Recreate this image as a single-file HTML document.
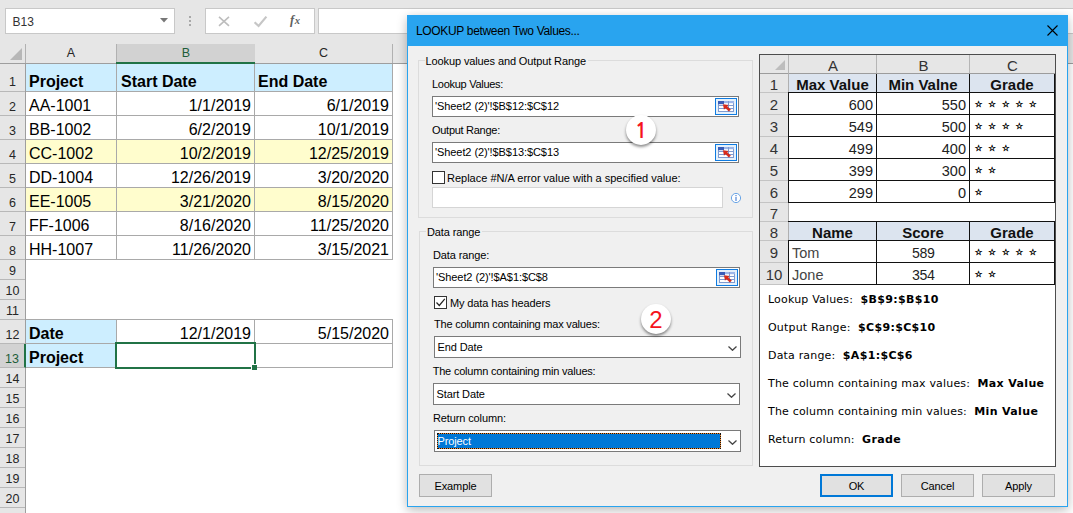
<!DOCTYPE html>
<html><head><meta charset="utf-8">
<style>
*{box-sizing:border-box;margin:0;padding:0}
html,body{width:1073px;height:513px;overflow:hidden;background:#fff}
body{position:relative;font-family:"Liberation Sans",sans-serif;color:#000}
.abs{position:absolute}
#topbar{left:0;top:0;width:1073px;height:44px;background:#e6e6e6}
.box{position:absolute;background:#fff;border:1px solid #c8c8c8}
#colhdr{z-index:2;left:0;top:44px;width:1073px;height:20px;background:#e6e6e6;border-bottom:1px solid #9e9e9e}
.ch{position:absolute;top:0;height:19px;font-size:12.5px;line-height:19px;text-align:center;color:#262626;border-right:1px solid #b1b1b1}
#rowhdr{left:0;top:64px;width:26px;height:449px;background:#e6e6e6;border-right:1px solid #9e9e9e}
.rh{position:absolute;left:0;width:25px;text-align:center;font-size:12.5px;color:#262626;border-bottom:1px solid #b8b8b8}
.cell{position:absolute;font-size:16px;white-space:nowrap;border-right:1px solid #a9a9a9;border-bottom:1px solid #a9a9a9;line-height:18px;padding:0 3px 0 3px;display:flex;align-items:flex-end}
.cell.r{justify-content:flex-end}
.cell.b{font-weight:bold}
.blue{background:#cdeeff}
.yel{background:#fffdcd}
</style></head><body>
<div id="topbar" class="abs"></div>
<div class="box" style="left:5px;top:8px;width:170px;height:26px"><span class="abs" style="left:6.5px;top:6px;font-size:12px;color:#333">B13</span>
<svg class="abs" style="left:154px;top:9px" width="9" height="5"><path d="M0 0h8l-4 4.5z" fill="#777"/></svg></div>
<svg class="abs" style="left:188px;top:15px" width="4" height="12"><rect x="1" y="1" width="2" height="2" fill="#a8a8a8"/><rect x="1" y="5" width="2" height="2" fill="#a8a8a8"/><rect x="1" y="9" width="2" height="2" fill="#a8a8a8"/></svg>
<div class="box" style="left:205px;top:8px;width:110px;height:26px">
<svg class="abs" style="left:12px;top:7px" width="12" height="11"><path d="M1 0.8L11 9.8M11 0.8L1 9.8" stroke="#bdbdbd" stroke-width="1.6" fill="none"/></svg>
<svg class="abs" style="left:47px;top:6px" width="15" height="13"><path d="M1.6 7.2L5.6 11L13.4 1.6" stroke="#c6c6c6" stroke-width="2.2" fill="none"/></svg>
<span class="abs" style="left:84px;top:1px;font-family:'Liberation Serif',serif;font-style:italic;font-weight:bold;font-size:12.5px;line-height:20px;color:#606060;letter-spacing:0.6px">f<span style="font-size:10.5px">x</span></span>
</div>
<div class="box" style="left:318px;top:8px;width:760px;height:26px"></div>

<div id="colhdr" class="abs">
<svg class="abs" style="left:10px;top:4px" width="13" height="13"><path d="M12 0V12H0z" fill="#b7b7b7"/></svg>
<div class="ch" style="left:0;width:26px"></div>
<div class="ch" style="left:26px;width:91px">A</div>
<div class="ch" style="left:117px;width:138px;background:#d2d2d2;color:#1e5e3a;border-right:0;font-size:12.5px">B</div>
<div class="abs" style="left:116px;top:18px;width:139px;height:2px;background:#217346"></div>
<div class="ch" style="left:255px;width:138px">C</div>
</div>
<div id="rowhdr" class="abs">
<div class="rh" style="top:0px;height:28px;line-height:37px">1</div>
<div class="rh" style="top:28px;height:24px;line-height:30px">2</div>
<div class="rh" style="top:52px;height:24px;line-height:30px">3</div>
<div class="rh" style="top:76px;height:24px;line-height:30px">4</div>
<div class="rh" style="top:100px;height:24px;line-height:30px">5</div>
<div class="rh" style="top:124px;height:24px;line-height:30px">6</div>
<div class="rh" style="top:148px;height:24px;line-height:30px">7</div>
<div class="rh" style="top:172px;height:24px;line-height:30px">8</div>
<div class="rh" style="top:196px;height:20px;line-height:22px">9</div>
<div class="rh" style="top:216px;height:20px;line-height:22px">10</div>
<div class="rh" style="top:236px;height:20px;line-height:22px">11</div>
<div class="rh" style="top:256px;height:24px;line-height:30px">12</div>
<div class="rh" style="top:280px;height:24px;line-height:30px;background:#d2d2d2;color:#1e5e3a;border-right:2px solid #217346;width:26px">13</div>
<div class="rh" style="top:304px;height:20px;line-height:22px">14</div>
<div class="rh" style="top:324px;height:20px;line-height:22px">15</div>
<div class="rh" style="top:344px;height:20px;line-height:22px">16</div>
<div class="rh" style="top:364px;height:20px;line-height:22px">17</div>
<div class="rh" style="top:384px;height:20px;line-height:22px">18</div>
<div class="rh" style="top:404px;height:20px;line-height:22px">19</div>
<div class="rh" style="top:424px;height:20px;line-height:22px">20</div>
<div class="rh" style="top:444px;height:20px;line-height:22px">21</div>
</div>
<div id="cells">
<div class="cell b blue" style="left:26px;top:64px;width:91px;height:28px">Project</div>
<div class="cell b blue" style="left:117px;top:64px;width:138px;height:28px;padding-left:4px">Start Date</div>
<div class="cell b blue" style="left:255px;top:64px;width:138px;height:28px">End Date</div>
<div class="cell" style="left:26px;top:92px;width:91px;height:24px">AA-1001</div>
<div class="cell r" style="left:117px;top:92px;width:138px;height:24px">1/1/2019</div>
<div class="cell r" style="left:255px;top:92px;width:138px;height:24px">6/1/2019</div>
<div class="cell" style="left:26px;top:116px;width:91px;height:24px">BB-1002</div>
<div class="cell r" style="left:117px;top:116px;width:138px;height:24px">6/2/2019</div>
<div class="cell r" style="left:255px;top:116px;width:138px;height:24px">10/1/2019</div>
<div class="cell yel" style="left:26px;top:140px;width:91px;height:24px">CC-1002</div>
<div class="cell yel r" style="left:117px;top:140px;width:138px;height:24px">10/2/2019</div>
<div class="cell yel r" style="left:255px;top:140px;width:138px;height:24px">12/25/2019</div>
<div class="cell" style="left:26px;top:164px;width:91px;height:24px">DD-1004</div>
<div class="cell r" style="left:117px;top:164px;width:138px;height:24px">12/26/2019</div>
<div class="cell r" style="left:255px;top:164px;width:138px;height:24px">3/20/2020</div>
<div class="cell yel" style="left:26px;top:188px;width:91px;height:24px">EE-1005</div>
<div class="cell yel r" style="left:117px;top:188px;width:138px;height:24px">3/21/2020</div>
<div class="cell yel r" style="left:255px;top:188px;width:138px;height:24px">8/15/2020</div>
<div class="cell" style="left:26px;top:212px;width:91px;height:24px">FF-1006</div>
<div class="cell r" style="left:117px;top:212px;width:138px;height:24px">8/16/2020</div>
<div class="cell r" style="left:255px;top:212px;width:138px;height:24px">11/25/2020</div>
<div class="cell" style="left:26px;top:236px;width:91px;height:24px">HH-1007</div>
<div class="cell r" style="left:117px;top:236px;width:138px;height:24px">11/26/2020</div>
<div class="cell r" style="left:255px;top:236px;width:138px;height:24px">3/15/2021</div>
<div class="cell b blue" style="left:26px;top:320px;width:91px;height:24px">Date</div>
<div class="cell r" style="left:117px;top:320px;width:138px;height:24px">12/1/2019</div>
<div class="cell r" style="left:255px;top:320px;width:138px;height:24px">5/15/2020</div>
<div class="cell b blue" style="left:26px;top:344px;width:91px;height:24px">Project</div>
<div class="cell r" style="left:117px;top:344px;width:138px;height:24px"></div>
<div class="cell r" style="left:255px;top:344px;width:138px;height:24px"></div>
<div class="abs" style="left:26px;top:319px;width:367px;height:1px;background:#a9a9a9"></div>
<div class="abs" style="left:115px;top:342px;width:141px;height:27px;border:2px solid #217346"></div>
<div class="abs" style="left:251px;top:364px;width:5px;height:5px;background:#217346;border:1px solid #fff;border-right:0;border-bottom:0;box-sizing:content-box"></div>
</div>
<style>
#dlg{z-index:5;left:407px;top:15px;width:661px;height:492px;background:#f0f0f0;border:1px solid #29a4ef;box-shadow:0 3px 10px 0 rgba(0,0,0,.28);font-size:11px;letter-spacing:-0.12px;color:#000}
#dlg .t{position:absolute;white-space:nowrap;line-height:13px}
#ttl{left:0;top:0;width:659px;height:30px;background:#29a4ef}
.grp{position:absolute;border:1px solid #dcdcdc}
.grp>.lg{position:absolute;top:-7px;left:4px;padding:0 2px 0 1px;background:#f0f0f0;line-height:13px;white-space:nowrap}
.inp{position:absolute;background:#fff;border:1px solid #7a7a7a;height:21px}
.inp>span{position:absolute;left:2px;top:3px;line-height:13px;white-space:nowrap;letter-spacing:-0.08px}
.refb{position:absolute;right:1px;top:1px;width:22px;height:17px;border:1px solid #0f7be0;background:#e5f1fb}
.sel{position:absolute;background:#fff;border:1px solid #7a7a7a;height:22px}
.sel>span{position:absolute;left:2.5px;top:4px;line-height:13px;white-space:nowrap}
.chev{position:absolute;right:3.5px;top:8.5px}
.btn{position:absolute;height:23px;background:#e1e1e1;border:1px solid #adadad;text-align:center;line-height:21px}
.cb{position:absolute;width:13px;height:13px;border:1px solid #333;background:#fff}
.num{position:absolute;width:30px;height:30px;border-radius:50%;background:#fff;box-shadow:0 2px 3px rgba(0,0,0,.45);color:#f5141c;font-size:24px;line-height:31px;text-align:center;letter-spacing:0}
#pv{left:351px;top:38px;width:297px;height:413px;background:#fff;border:1px solid #4d4d4d;overflow:hidden;letter-spacing:0}
</style>
<div id="dlg" class="abs">
<div id="ttl" class="abs"><span class="t" style="left:8px;top:8px;font-size:12px;letter-spacing:-0.33px;line-height:14px">LOOKUP between Two Values...</span>
<svg class="abs" style="left:639px;top:9px" width="11" height="11"><path d="M0.5 0.5L10.5 10.5M10.5 0.5L0.5 10.5" stroke="#000" stroke-width="1.1" fill="none"/></svg></div>

<div class="grp" style="left:10px;top:44px;width:335px;height:158px"><span class="lg" style="left:5.6px;top:-6px">Lookup values and Output Range</span></div>
<span class="t" style="left:24px;top:62px;letter-spacing:-0.28px">Lookup Values:</span>
<div class="inp" style="left:24px;top:80px;width:307px"><span>'Sheet2 (2)'!$B$12:$C$12</span><div class="refb"><svg class="abs" style="left:2px;top:2px" width="16" height="11" viewBox="0 0 16 11"><rect x="0.5" y="0.5" width="15" height="10" fill="#fff" stroke="#7f9bd1"/><rect x="0" y="0" width="16" height="2.2" fill="#9db7ea"/><rect x="0" y="0" width="6" height="3.2" fill="#3a5db8"/><path d="M0 4.5H16M0 7.5H16M10.5 0V11" stroke="#7f9bd1" stroke-width="1" fill="none"/><path d="M5.2 3.4L10.3 4.2L9 5.4L12.6 8.6L10.9 10.3L7.5 6.9L6.2 8.3Z" fill="#dc2a1a" stroke="#b81d10" stroke-width="0.4"/></svg></div></div>
<span class="t" style="left:24px;top:108px;letter-spacing:-0.28px">Output Range:</span>
<div class="inp" style="left:24px;top:126px;width:307px"><span>'Sheet2 (2)'!$B$13:$C$13</span><div class="refb"><svg class="abs" style="left:2px;top:2px" width="16" height="11" viewBox="0 0 16 11"><rect x="0.5" y="0.5" width="15" height="10" fill="#fff" stroke="#7f9bd1"/><rect x="0" y="0" width="16" height="2.2" fill="#9db7ea"/><rect x="0" y="0" width="6" height="3.2" fill="#3a5db8"/><path d="M0 4.5H16M0 7.5H16M10.5 0V11" stroke="#7f9bd1" stroke-width="1" fill="none"/><path d="M5.2 3.4L10.3 4.2L9 5.4L12.6 8.6L10.9 10.3L7.5 6.9L6.2 8.3Z" fill="#dc2a1a" stroke="#b81d10" stroke-width="0.4"/></svg></div></div>
<div class="cb" style="left:24px;top:155px"></div>
<span class="t" style="left:39px;top:156px;letter-spacing:0">Replace #N/A error value with a specified value:</span>
<div class="inp" style="left:24px;top:171px;width:291px;height:21px;border-color:#d5d5d5"></div>
<svg class="abs" style="left:321.6px;top:175.5px" width="12" height="12"><circle cx="6" cy="6" r="4.6" fill="#fff" stroke="#6aa5e6" stroke-width="1"/><rect x="5.5" y="5" width="1" height="4" fill="#2f6fd0"/><rect x="5.5" y="3" width="1" height="1.2" fill="#2f6fd0"/></svg>

<div class="grp" style="left:11px;top:215px;width:334px;height:235px"><span class="lg" style="left:6px;top:-6px">Data range</span></div>
<span class="t" style="left:25px;top:233px">Data range:</span>
<div class="inp" style="left:25px;top:251px;width:307px"><span>'Sheet2 (2)'!$A$1:$C$8</span><div class="refb"><svg class="abs" style="left:2px;top:2px" width="16" height="11" viewBox="0 0 16 11"><rect x="0.5" y="0.5" width="15" height="10" fill="#fff" stroke="#7f9bd1"/><rect x="0" y="0" width="16" height="2.2" fill="#9db7ea"/><rect x="0" y="0" width="6" height="3.2" fill="#3a5db8"/><path d="M0 4.5H16M0 7.5H16M10.5 0V11" stroke="#7f9bd1" stroke-width="1" fill="none"/><path d="M5.2 3.4L10.3 4.2L9 5.4L12.6 8.6L10.9 10.3L7.5 6.9L6.2 8.3Z" fill="#dc2a1a" stroke="#b81d10" stroke-width="0.4"/></svg></div></div>
<div class="cb" style="left:26px;top:280px"><svg class="abs" style="left:0;top:0" width="11" height="11"><path d="M1.5 5.5L4.3 8.5L9.8 1.8" stroke="#222" stroke-width="1.2" fill="none"/></svg></div>
<span class="t" style="left:42px;top:281px">My data has headers</span>
<span class="t" style="left:26px;top:302px;letter-spacing:-0.2px">The column containing max values:</span>
<div class="sel" style="left:26px;top:320px;width:307px"><span>End Date</span><svg class="chev" width="9" height="5"><path d="M0.5 0.5L4.5 4.3L8.5 0.5" stroke="#444" stroke-width="1.25" fill="none"/></svg></div>
<span class="t" style="left:24.7px;top:349px;letter-spacing:-0.2px">The column containing min values:</span>
<div class="sel" style="left:25px;top:367px;width:307px"><span>Start Date</span><svg class="chev" width="9" height="5"><path d="M0.5 0.5L4.5 4.3L8.5 0.5" stroke="#444" stroke-width="1.25" fill="none"/></svg></div>
<span class="t" style="left:25px;top:396px">Return column:</span>
<div class="sel" style="left:26px;top:414px;width:307px"><div class="abs" style="left:2px;top:2px;width:284px;height:16px;background:#0078d7;box-shadow:inset 0 0 0 1px #f08a30;outline:1px dotted #111;outline-offset:-1px"></div><span style="color:#fff">Project</span><svg class="chev" width="9" height="5"><path d="M0.5 0.5L4.5 4.3L8.5 0.5" stroke="#444" stroke-width="1.25" fill="none"/></svg></div>

<div class="num" style="left:218px;top:99px;font-family:'NanumGothic','Liberation Sans',sans-serif;font-weight:bold;font-size:21px">1</div>
<div class="num" style="left:233px;top:288px">2</div>

<div class="btn" style="left:11px;top:458px;width:73px;line-height:23px">Example</div>
<div class="btn" style="left:412px;top:458px;width:73px;border:2px solid #0078d7;line-height:21px">OK</div>
<div class="btn" style="left:493px;top:458px;width:73px;line-height:23px">Cancel</div>
<div class="btn" style="left:574px;top:458px;width:73px;line-height:23px">Apply</div>

<div id="pv" class="abs">
<style>#pv .p{position:absolute;white-space:nowrap}#pv .c{position:absolute;white-space:nowrap;font-size:14.5px;color:#222;line-height:16px}#pv .hb{font-weight:bold;font-size:15px;color:#111;text-align:center}#pv .ln{position:absolute;background:#111}#pv .st{position:absolute;font-family:"DejaVu Sans",sans-serif;font-size:8.5px;letter-spacing:5.98px;color:#000;-webkit-text-stroke:0.4px #000;line-height:12px}#pv .pt{position:absolute;white-space:nowrap;font-family:"DejaVu Sans","Liberation Sans",sans-serif;font-size:11px;letter-spacing:0.18px;line-height:13px;left:8px;color:#000}#pv .pt b{letter-spacing:0.35px}</style>
<div class="p" style="left:0;top:0;width:295px;height:18px;background:#e6e6e6"></div>
<div class="p" style="left:0;top:0;width:28px;height:230px;background:#e6e6e6"></div>
<svg class="p" style="left:15px;top:5px" width="10" height="10"><path d="M10 0V10H0z" fill="#bdbdbd"/></svg>
<div class="c" style="left:29px;top:3px;width:88px;text-align:center;color:#333;font-size:15px">A</div>
<div class="c" style="left:117px;top:3px;width:93px;text-align:center;color:#333;font-size:15px">B</div>
<div class="c" style="left:210px;top:3px;width:85px;text-align:center;color:#333;font-size:15px">C</div>
<div class="p" style="left:28px;top:0;width:1px;height:18px;background:#b5b5b5"></div>
<div class="p" style="left:116px;top:0;width:1px;height:18px;background:#b5b5b5"></div>
<div class="p" style="left:209px;top:0;width:1px;height:18px;background:#b5b5b5"></div>
<div class="p" style="left:0;top:18px;width:295px;height:1px;background:#9c9c9c"></div>
<div class="p" style="left:28px;top:18px;width:1px;height:212px;background:#b0b0b0"></div>
<div class="c" style="left:0;top:22px;width:28px;text-align:center;color:#333;font-size:15px">1</div>
<div class="p" style="left:0;top:37px;width:28px;height:1px;background:#c4c4c4"></div>
<div class="c" style="left:0;top:42px;width:28px;text-align:center;color:#333;font-size:15px">2</div>
<div class="p" style="left:0;top:59px;width:28px;height:1px;background:#c4c4c4"></div>
<div class="c" style="left:0;top:64px;width:28px;text-align:center;color:#333;font-size:15px">3</div>
<div class="p" style="left:0;top:81px;width:28px;height:1px;background:#c4c4c4"></div>
<div class="c" style="left:0;top:86px;width:28px;text-align:center;color:#333;font-size:15px">4</div>
<div class="p" style="left:0;top:103px;width:28px;height:1px;background:#c4c4c4"></div>
<div class="c" style="left:0;top:108px;width:28px;text-align:center;color:#333;font-size:15px">5</div>
<div class="p" style="left:0;top:125px;width:28px;height:1px;background:#c4c4c4"></div>
<div class="c" style="left:0;top:130px;width:28px;text-align:center;color:#333;font-size:15px">6</div>
<div class="p" style="left:0;top:147px;width:28px;height:1px;background:#c4c4c4"></div>
<div class="c" style="left:0;top:151px;width:28px;text-align:center;color:#333;font-size:15px">7</div>
<div class="p" style="left:0;top:166px;width:28px;height:1px;background:#c4c4c4"></div>
<div class="c" style="left:0;top:170px;width:28px;text-align:center;color:#333;font-size:15px">8</div>
<div class="p" style="left:0;top:185px;width:28px;height:1px;background:#c4c4c4"></div>
<div class="c" style="left:0;top:190px;width:28px;text-align:center;color:#333;font-size:15px">9</div>
<div class="p" style="left:0;top:207px;width:28px;height:1px;background:#c4c4c4"></div>
<div class="c" style="left:0;top:212px;width:28px;text-align:center;color:#333;font-size:15px">10</div>
<div class="p" style="left:0;top:229px;width:28px;height:1px;background:#c4c4c4"></div>
<div class="p" style="left:29px;top:19px;width:266px;height:18px;background:#dce4ef"></div>
<div class="p" style="left:29px;top:167px;width:266px;height:18px;background:#dce4ef"></div>
<div class="ln" style="left:28px;top:37px;width:267px;height:1px"></div>
<div class="ln" style="left:28px;top:59px;width:267px;height:1px"></div>
<div class="ln" style="left:28px;top:81px;width:267px;height:1px"></div>
<div class="ln" style="left:28px;top:103px;width:267px;height:1px"></div>
<div class="ln" style="left:28px;top:125px;width:267px;height:1px"></div>
<div class="ln" style="left:28px;top:147px;width:267px;height:1px"></div>
<div class="ln" style="left:28px;top:166px;width:267px;height:1px"></div>
<div class="ln" style="left:28px;top:185px;width:267px;height:1px"></div>
<div class="ln" style="left:28px;top:207px;width:267px;height:1px"></div>
<div class="ln" style="left:28px;top:229px;width:267px;height:1px"></div>
<div class="ln" style="left:28px;top:38px;width:1px;height:110px"></div>
<div class="ln" style="left:116px;top:19px;width:1px;height:129px"></div>
<div class="ln" style="left:209px;top:19px;width:1px;height:129px"></div>
<div class="ln" style="left:294px;top:19px;width:1px;height:129px"></div>
<div class="ln" style="left:28px;top:186px;width:1px;height:44px"></div>
<div class="ln" style="left:116px;top:167px;width:1px;height:63px"></div>
<div class="ln" style="left:209px;top:167px;width:1px;height:63px"></div>
<div class="ln" style="left:294px;top:167px;width:1px;height:63px"></div>
<div class="c hb" style="left:29px;top:22px;width:87px;text-align:center;">Max Value</div>
<div class="c hb" style="left:117px;top:22px;width:92px;text-align:center;">Min Valne</div>
<div class="c hb" style="left:210px;top:22px;width:84px;text-align:center;">Grade</div>
<div class="c " style="left:29px;top:42px;width:87px;text-align:right;padding-right:3px;">600</div>
<div class="c " style="left:117px;top:42px;width:92px;text-align:right;padding-right:3px;">550</div>
<div class="st" style="left:214.7px;top:43px">☆☆☆☆☆</div>
<div class="c " style="left:29px;top:64px;width:87px;text-align:right;padding-right:3px;">549</div>
<div class="c " style="left:117px;top:64px;width:92px;text-align:right;padding-right:3px;">500</div>
<div class="st" style="left:214.7px;top:65px">☆☆☆☆</div>
<div class="c " style="left:29px;top:86px;width:87px;text-align:right;padding-right:3px;">499</div>
<div class="c " style="left:117px;top:86px;width:92px;text-align:right;padding-right:3px;">400</div>
<div class="st" style="left:214.7px;top:87px">☆☆☆</div>
<div class="c " style="left:29px;top:108px;width:87px;text-align:right;padding-right:3px;">399</div>
<div class="c " style="left:117px;top:108px;width:92px;text-align:right;padding-right:3px;">300</div>
<div class="st" style="left:214.7px;top:109px">☆☆</div>
<div class="c " style="left:29px;top:130px;width:87px;text-align:right;padding-right:3px;">299</div>
<div class="c " style="left:117px;top:130px;width:92px;text-align:right;padding-right:3px;">0</div>
<div class="st" style="left:214.7px;top:131px">☆</div>
<div class="c hb" style="left:29px;top:170px;width:87px;text-align:center;">Name</div>
<div class="c hb" style="left:117px;top:170px;width:92px;text-align:center;">Score</div>
<div class="c hb" style="left:210px;top:170px;width:84px;text-align:center;">Grade</div>
<div class="c " style="left:29px;top:190px;width:87px;text-align:left;padding-left:3px;color:#444">Tom</div>
<div class="c " style="left:29px;top:212px;width:87px;text-align:left;padding-left:3px;color:#444">Jone</div>
<div class="c " style="left:117px;top:190px;width:92px;text-align:center;font-family:'Liberation Mono',monospace;font-size:14px;letter-spacing:-0.9px;margin-top:1px;">589</div>
<div class="c " style="left:117px;top:212px;width:92px;text-align:center;font-family:'Liberation Mono',monospace;font-size:14px;letter-spacing:-0.9px;margin-top:1px;">354</div>
<div class="st" style="left:214.7px;top:191px">☆☆☆☆☆</div>
<div class="st" style="left:214.7px;top:213px">☆☆</div>
<div class="pt" style="top:238px">Lookup Values:&nbsp; <b>$B$9:$B$10</b></div>
<div class="pt" style="top:266px">Output Range:&nbsp; <b>$C$9:$C$10</b></div>
<div class="pt" style="top:294px">Data range:&nbsp; <b>$A$1:$C$6</b></div>
<div class="pt" style="top:322px">The column containing max values:&nbsp; <b>Max Value</b></div>
<div class="pt" style="top:350px">The column containing min values:&nbsp; <b>Min Value</b></div>
<div class="pt" style="top:378px">Return column:&nbsp; <b>Grade</b></div>
</div>
</div>

</body></html>
